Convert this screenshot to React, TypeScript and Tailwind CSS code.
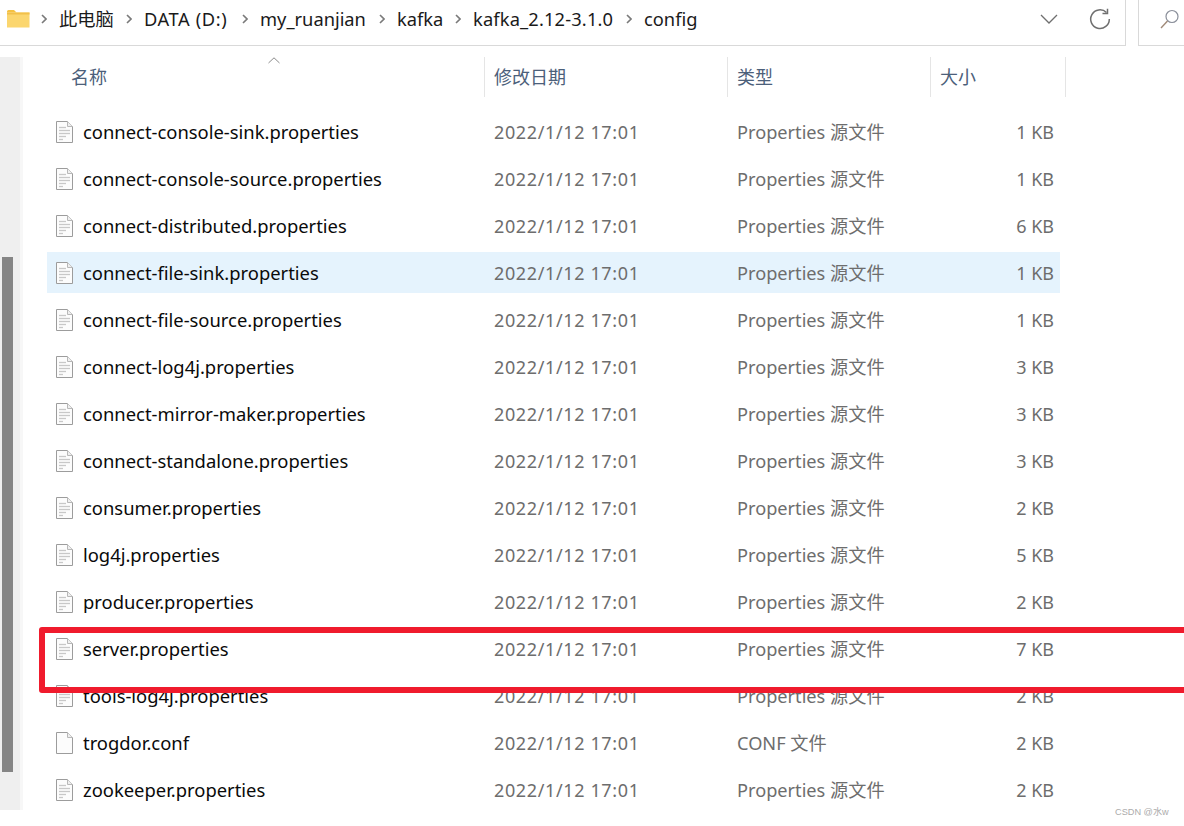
import React from "react";

const FONT = "[font-family:'Noto_Sans','Noto_Sans_CJK_SC',sans-serif]";

const rows: [string, string, string, boolean?][] = [
  ["connect-console-sink.properties", "Properties 源文件", "1 KB"],
  ["connect-console-source.properties", "Properties 源文件", "1 KB"],
  ["connect-distributed.properties", "Properties 源文件", "6 KB"],
  ["connect-file-sink.properties", "Properties 源文件", "1 KB", true],
  ["connect-file-source.properties", "Properties 源文件", "1 KB"],
  ["connect-log4j.properties", "Properties 源文件", "3 KB"],
  ["connect-mirror-maker.properties", "Properties 源文件", "3 KB"],
  ["connect-standalone.properties", "Properties 源文件", "3 KB"],
  ["consumer.properties", "Properties 源文件", "2 KB"],
  ["log4j.properties", "Properties 源文件", "5 KB"],
  ["producer.properties", "Properties 源文件", "2 KB"],
  ["server.properties", "Properties 源文件", "7 KB"],
  ["tools-log4j.properties", "Properties 源文件", "2 KB"],
  ["trogdor.conf", "CONF 文件", "2 KB"],
  ["zookeeper.properties", "Properties 源文件", "2 KB"],
];

function FileIcon({ lines }: { lines: boolean }) {
  return (
    <svg width="17" height="22" viewBox="0 0 17 22" className="shrink-0">
      <path d="M0.5 0.5H11.5L16.5 5.5V21.5H0.5Z" fill="#fcfcfc" stroke="#9c9c9c" />
      <path d="M11.5 0.5V5.5H16.5" fill="#efefef" stroke="#b8b8b8" />
      {lines && (
        <g stroke="#c8c8c8" strokeWidth="1.3">
          <path d="M3 6.5H10" />
          <path d="M3 9.5H14" />
          <path d="M3 12.5H14" />
          <path d="M3 15.5H10" />
          <path d="M3 18.5H7" />
        </g>
      )}
    </svg>
  );
}

function Chevron() {
  return (
    <svg width="6" height="10" viewBox="0 0 6 10" className="shrink-0 mx-[12px]">
      <path d="M1 1L5 5L1 9" fill="none" stroke="#7a7a7a" strokeWidth="1.6" />
    </svg>
  );
}

function Crumb({ text, w }: { text: string; w: string }) {
  return <span className={`text-[18.3px] leading-none text-[#1a1a1a] whitespace-nowrap ${w}`}>{text}</span>;
}

function Head({ text, w }: { text: string; w: string }) {
  return (
    <div className={`h-full flex items-center pl-[9px] border-r border-[#e5e5e5] text-[18px] text-[#4c607a] ${w}`}>{text}</div>
  );
}

export default function App() {
  return (
    <div className={`relative w-[1184px] h-[826px] overflow-hidden bg-white ${FONT}`}>
      <div className="h-[46px] flex">
        <div className="w-[1126px] h-full border-r border-b border-[#d9d9d9] flex items-center pl-[7px] pb-[7px]">
          <svg width="23" height="18" viewBox="0 0 23 18" className="shrink-0 mr-[-1px]">
            <path d="M0 1.5Q0 0 1.5 0H7L9.5 2.5H0Z" fill="#f5c242" />
            <rect x="0" y="2.5" width="22.5" height="15" fill="#fbd66f" />
            <rect x="0" y="2.5" width="22.5" height="2" fill="#f2c04a" />
          </svg>
          <Chevron />
          <Crumb text="此电脑" w="w-[55px]" />
          <Chevron />
          <Crumb text="DATA (D:)" w="w-[86px] tracking-[0.6px]" />
          <Chevron />
          <Crumb text="my_ruanjian" w="w-[107px]" />
          <Chevron />
          <Crumb text="kafka" w="w-[46px]" />
          <Chevron />
          <Crumb text="kafka_2.12-3.1.0" w="w-[141px] tracking-[0.15px]" />
          <Chevron />
          <Crumb text="config" w="w-[54px]" />
          <div className="flex-1" />
          <svg width="18" height="10" viewBox="0 0 18 10" className="shrink-0 mr-[31px]">
            <path d="M1 1L9 9L17 1" fill="none" stroke="#6f6f6f" strokeWidth="1.3" />
          </svg>
          <svg width="22" height="22" viewBox="0 0 22 22" className="shrink-0 mr-[14px]">
            <path d="M17.5 4.5A9.3 9.3 0 1 0 20.3 11" fill="none" stroke="#6f6f6f" strokeWidth="1.5" />
            <path d="M13.5 5.5H18.5V0.8" fill="none" stroke="#6f6f6f" strokeWidth="1.5" />
          </svg>
        </div>
        <div className="w-[12px]" />
        <div className="flex-1 h-full border-l border-b border-[#d9d9d9] flex items-center pl-[21px] pb-[7px]">
          <svg width="20" height="20" viewBox="0 0 20 20">
            <circle cx="12" cy="7.5" r="6" fill="none" stroke="#8a8f9a" strokeWidth="1.2" />
            <path d="M7.5 12L1 19" stroke="#a08a78" strokeWidth="1.4" />
          </svg>
        </div>
      </div>

      <div className="flex h-[753px] mt-[11px]">
        <div className="w-[20px] bg-[#efefef] pl-[2px] pt-[200px] shrink-0">
          <div className="w-[11px] h-[515px] bg-[#858585]" />
        </div>
        <div className="w-[3px] bg-[#f7f7f7] shrink-0" />
        <div className="flex-1">
          <div className="h-[40px] flex ml-[39px] relative">
            <Head text="名称" w="w-[423px]" />
            <Head text="修改日期" w="w-[243px]" />
            <Head text="类型" w="w-[203px]" />
            <Head text="大小" w="w-[135px]" />
            <svg width="12" height="7" viewBox="0 0 12 7" className="absolute left-[206px] top-0">
              <path d="M0.5 6L6 0.8L11.5 6" fill="none" stroke="#8a8a8a" />
            </svg>
          </div>
          <div className="flex flex-col gap-[6px] mt-[14px] ml-[24px] w-[1013px]">
            {rows.map(([name, type, size, hl]) => (
              <div key={name} className={`h-[41px] flex items-center pl-[9px] pt-[2px] text-[18px] ${hl ? "bg-[#e5f3fd]" : ""}`}>
                <div className="w-[438px] flex items-center gap-[10px] text-[#0a0a0a] whitespace-nowrap">
                  <FileIcon lines={name !== "trogdor.conf"} />
                  <span className="text-[18.4px] mb-[2px]">{name}</span>
                </div>
                <div className="w-[243px] text-[#6d6d6d] whitespace-nowrap tracking-[0.63px]">2022/1/12 17:01</div>
                <div className="w-[317px] flex justify-between text-[#6d6d6d] whitespace-nowrap">
                  <span className="text-[18.2px]">{type}</span>
                  <span>{size}</span>
                </div>
              </div>
            ))}
          </div>
        </div>
      </div>

      <div className="absolute left-[39px] top-[627px] w-[1170px] h-[66px] border-[6px] border-[#f01b2d] rounded-[3px]" />
      <div className="absolute left-[1115px] top-[805px] text-[9.2px] leading-[14px] text-[#ababab] [font-family:'Liberation_Sans','Noto_Sans_CJK_SC',sans-serif]">CSDN @水w</div>
    </div>
  );
}
